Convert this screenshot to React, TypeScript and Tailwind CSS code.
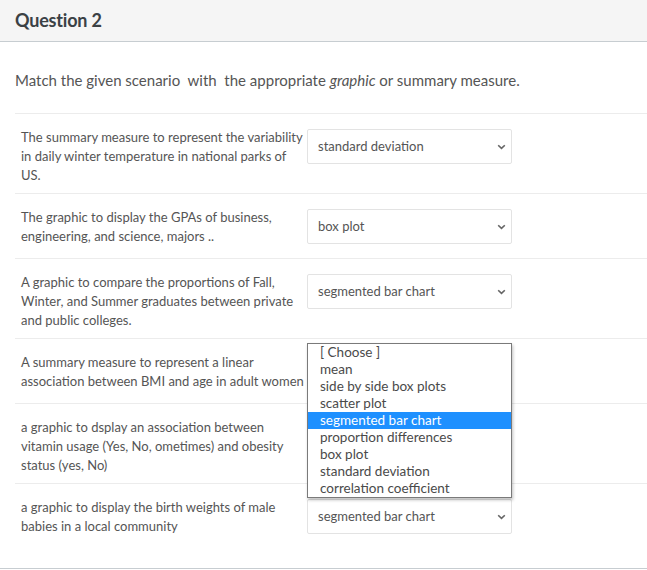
import React from "react";

const rows = [
  {
    text: "The summary measure to represent the variability in daily winter temperature in national parks of US.",
    value: "standard deviation",
  },
  {
    text: "The graphic to display the GPAs of business, engineering, and science, majors ..",
    value: "box plot",
  },
  {
    text: "A graphic to compare the proportions of Fall, Winter, and Summer graduates between private and public colleges.",
    value: "segmented bar chart",
  },
  {
    text: "A summary measure to represent a linear association between BMI and age in adult women",
    value: "[ Choose ]",
    open: true,
  },
  {
    text: "a graphic to dsplay an association between vitamin usage (Yes, No, ometimes) and obesity status (yes, No)",
    value: "segmented bar chart",
  },
  {
    text: "a graphic to display the birth weights of male babies in a local community",
    value: "segmented bar chart",
  },
];

const options = [
  "[ Choose ]",
  "mean",
  "side by side box plots",
  "scatter plot",
  "segmented bar chart",
  "proportion differences",
  "box plot",
  "standard deviation",
  "correlation coefficient",
];

function Chevron() {
  return (
    <svg width="9" height="6" viewBox="0 0 9 6" className="shrink-0">
      <path d="M1.2 1.2 L4.5 4.4 L7.8 1.2" fill="none" stroke="#666" strokeWidth="1.6" />
    </svg>
  );
}

export default function App() {
  return (
    <div
      className="w-[647px] h-[570px] bg-white overflow-hidden"
      style={{ fontFamily: "Lato, 'Noto Sans', sans-serif" }}
    >
      <div className="h-[42px] bg-[#f5f5f5] border-b border-[#c7cdd1] flex items-center pl-[15px]">
        <span className="text-[18px] font-bold text-[#3b4145] tracking-[-0.2px]">Question 2</span>
      </div>
      <div className="pt-[28px] pl-[15px] text-[15px] text-[#555] leading-[20px] whitespace-pre">
        Match the given scenario  with  the appropriate <i>graphic</i> or summary measure.
      </div>
      <div className="mt-[23px] border-b border-[#c7cdd1] pb-[20px]">
        {rows.map((r, i) => (
          <div key={i} className="ml-[15px] border-t border-[#ececec] flex items-start pt-[14px] pb-[8px]">
            <div className="w-[292px] pl-[6px] text-[13px] leading-[19px] text-[#555] min-h-[42px]">
              {r.text}
            </div>
            <div className="relative mt-[1px]">
              <div className="w-[205px] h-[35px] border border-[#e3e3e3] rounded-[2px] bg-white flex items-center justify-between pl-[10px] pr-[5px] text-[13px] text-[#555]">
                <span>{r.value}</span>
                <Chevron />
              </div>
              {r.open && (
                <div className="absolute left-0 top-[-11px] w-[205px] bg-white border border-[#7a7a7a] shadow-[1px_2px_3px_rgba(0,0,0,0.25)] z-10">
                  {options.map((o, j) => (
                    <div
                      key={j}
                      className={
                        j === 4
                          ? "h-[17px] leading-[17px] pl-[12px] text-[13.5px] bg-[#1e90ff] text-white"
                          : "h-[17px] leading-[17px] pl-[12px] text-[13.5px] text-[#4a4a4a]"
                      }
                    >
                      {o}
                    </div>
                  ))}
                </div>
              )}
            </div>
          </div>
        ))}
      </div>
    </div>
  );
}
